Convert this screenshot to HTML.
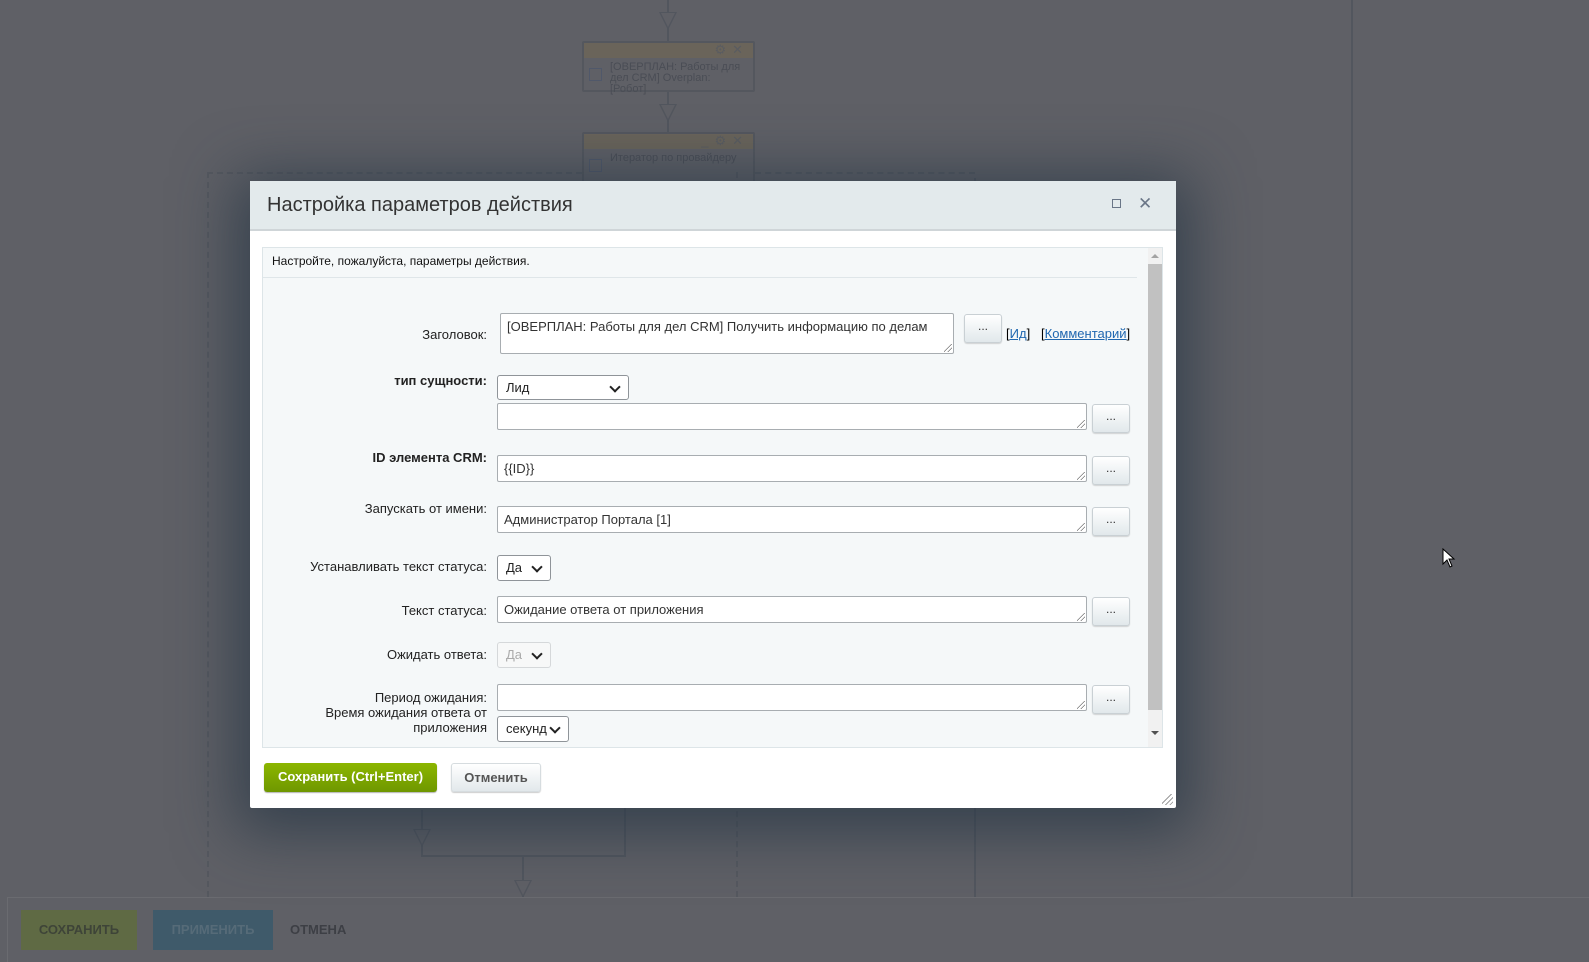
<!DOCTYPE html>
<html><head><meta charset="utf-8"><style>
*{box-sizing:border-box}
body{margin:0;width:1589px;height:962px;background:#5f6066;position:relative;overflow:hidden;font-family:"Liberation Sans",Arial,sans-serif;font-size:13px;color:#000}
.abs{position:absolute}
.vl{position:absolute;width:0;border-left:2px solid #52565e}
.dl{position:absolute;width:0;border-left:2px dashed #55585f}
.node{position:absolute;border:2px solid #54575e;background:#5f6066;border-radius:2px}
.node .h{height:15px;background:#6a645a;color:#5a5c60;font-size:13px;text-align:right;padding-right:4px;line-height:14px;letter-spacing:6px}
.node .t{color:#4a4d55;font-size:11px;line-height:11px;padding:4px 4px 0 26px;position:relative}
.node .ic{position:absolute;left:5px;top:10px;width:13px;height:13px;border:1px solid #50586a}
.tri{position:absolute;width:0;height:0;border-left:9px solid transparent;border-right:9px solid transparent;border-top:18px solid #52565e}
.tri:after{content:"";position:absolute;left:-7px;top:-17px;border-left:7px solid transparent;border-right:7px solid transparent;border-top:14px solid #5f6066}
.dlg{position:absolute;left:250px;top:181px;width:926px;height:627px;background:#fff;border-radius:2px;box-shadow:0 10px 60px 15px rgba(40,55,70,.75)}
.hd{height:50px;background:#e3eaec;border-bottom:2px solid #cfd5d8;font-size:20px;color:#333;padding:13px 17px 9px}
.panel{position:absolute;left:12px;top:66px;width:901px;height:501px;background:#f5f8f9;border:1px solid #dde5e8;overflow:hidden}
.lbl{position:absolute;right:675px;text-align:right;font-size:13px;color:#222;white-space:nowrap}
.ta{position:absolute;background:#fff;border:1px solid #a8adb1;border-radius:2px;font-size:13px;color:#333;padding:5px 6px}
.ta:after{content:"";position:absolute;right:1px;bottom:1px;width:8px;height:8px;background:linear-gradient(135deg,transparent 45%,#777 46%,#777 52%,transparent 53%,transparent 70%,#777 71%,#777 77%,transparent 78%)}
.sel{position:absolute;background:#fff;border:1px solid #8f9499;border-radius:3px;font-size:13px;color:#222;padding:4px 8px}
.sel:after{content:"";position:absolute;right:9px;top:7px;width:6px;height:6px;border-right:2px solid #222;border-bottom:2px solid #222;transform:rotate(45deg)}
.btn{position:absolute;width:38px;height:29px;border:1px solid #c9d0d4;border-radius:3px;background:linear-gradient(#fff,#e1e8eb);text-align:center;font-size:12px;line-height:22px;color:#333;box-shadow:0 1px 1px rgba(0,0,0,.15)}
a{color:#2067b0}
</style></head><body>
<div class="vl" style="left:667px;top:0;height:41px"></div>
<div class="tri" style="left:659px;top:12px"></div>
<div class="node" style="left:582px;top:41px;width:173px;height:51px"><div class="h">⚙✕</div><div class="t"><span class="ic"></span>[ОВЕРПЛАН: Работы для дел CRM] Overplan: [Робот]</div></div>
<div class="vl" style="left:667px;top:92px;height:40px"></div>
<div class="tri" style="left:659px;top:104px"></div>
<div class="node" style="left:582px;top:132px;width:173px;height:60px"><div class="h">_⚙✕</div><div class="t"><span class="ic"></span>Итератор по провайдеру</div></div>
<div class="dl" style="left:207px;top:172px;height:725px"></div>
<div class="dl" style="left:736px;top:172px;height:725px"></div>
<div class="abs" style="left:207px;top:172px;width:375px;border-top:2px dashed #55585f"></div>
<div class="abs" style="left:755px;top:172px;width:220px;border-top:2px dashed #55585f"></div>
<div class="vl" style="left:974px;top:178px;height:720px"></div>
<div class="vl" style="left:1351px;top:0;height:897px"></div>
<div class="vl" style="left:421px;top:810px;height:46px"></div>
<div class="vl" style="left:624px;top:808px;height:48px"></div>
<div class="abs" style="left:421px;top:855px;width:205px;border-top:2px solid #52565e"></div>
<div class="tri" style="left:413px;top:829px"></div>
<div class="vl" style="left:522px;top:856px;height:41px"></div>
<div class="tri" style="left:514px;top:880px"></div>
<div class="abs" style="left:7px;top:897px;width:1582px;height:65px;border-top:1px solid #6a6b70;border-left:1px solid #6a6b70;background:#5f6066"></div>
<div class="abs" style="left:21px;top:910px;width:116px;height:40px;background:#5f6a44;color:#3e4438;font-weight:bold;font-size:13px;text-align:center;line-height:40px">СОХРАНИТЬ</div>
<div class="abs" style="left:153px;top:910px;width:120px;height:40px;background:#3f5a6a;color:#566b78;font-weight:bold;font-size:13px;text-align:center;line-height:40px">ПРИМЕНИТЬ</div>
<div class="abs" style="left:290px;top:910px;height:40px;color:#3d3f45;font-weight:bold;font-size:13px;line-height:40px">ОТМЕНА</div>
<svg class="abs" style="left:1442px;top:548px" width="14" height="20"><path d="M1 1 L1 16 L5 12 L8 19 L10 18 L7 11 L12 11 Z" fill="#fff" stroke="#000" stroke-width="1"/></svg>

<div class="dlg">
 <div class="hd">Настройка параметров действия
  <span style="position:absolute;left:862px;top:18px;width:9px;height:9px;border:1.5px solid #6a7687"></span>
  <span style="position:absolute;left:888px;top:13px;font-size:17px;color:#6a7687">✕</span>
 </div>
 <div class="panel">
  <div class="abs" style="left:9px;top:6px;font-size:12px;color:#111">Настройте, пожалуйста, параметры действия.</div>
  <div class="abs" style="left:0;top:29px;width:874px;border-top:1px solid #dfe6e9"></div>
  <div class="abs" style="left:885px;top:0;width:16px;height:501px;background:#f1f1f1"></div>
  <div class="abs" style="left:885px;top:16px;width:14px;height:446px;background:#c1c1c1"></div>
  <div class="abs" style="left:888px;top:6px;border-left:4px solid transparent;border-right:4px solid transparent;border-bottom:4px solid #a3a3a3"></div>
  <div class="abs" style="left:888px;top:483px;border-left:4px solid transparent;border-right:4px solid transparent;border-top:4px solid #505050"></div>

  <div class="lbl" style="top:79px">Заголовок:</div>
  <div class="ta" style="left:237px;top:65px;width:454px;height:41px">[ОВЕРПЛАН: Работы для дел CRM] Получить информацию по делам</div>
  <div class="btn" style="left:701px;top:66px">...</div>
  <div class="abs" style="left:743px;top:78px">[<a href="#">Ид</a>]&nbsp;&nbsp;&nbsp;[<a href="#">Комментарий</a>]</div>

  <div class="lbl" style="top:125px;font-weight:bold">тип сущности:</div>
  <div class="sel" style="left:234px;top:127px;width:132px;height:25px">Лид</div>
  <div class="ta" style="left:234px;top:155px;width:590px;height:27px"></div>
  <div class="btn" style="left:829px;top:156px">...</div>

  <div class="lbl" style="top:202px;font-weight:bold">ID элемента CRM:</div>
  <div class="ta" style="left:234px;top:207px;width:590px;height:27px">{{ID}}</div>
  <div class="btn" style="left:829px;top:208px">...</div>

  <div class="lbl" style="top:253px">Запускать от имени:</div>
  <div class="ta" style="left:234px;top:258px;width:590px;height:27px">Администратор Портала [1]</div>
  <div class="btn" style="left:829px;top:259px">...</div>

  <div class="lbl" style="top:311px">Устанавливать текст статуса:</div>
  <div class="sel" style="left:234px;top:307px;width:54px;height:26px">Да</div>

  <div class="lbl" style="top:355px">Текст статуса:</div>
  <div class="ta" style="left:234px;top:348px;width:590px;height:27px">Ожидание ответа от приложения</div>
  <div class="btn" style="left:829px;top:349px">...</div>

  <div class="lbl" style="top:399px">Ожидать ответа:</div>
  <div class="sel" style="left:234px;top:394px;width:54px;height:26px;color:#aaa;border-color:#d5d8da;background:#f7f8f8">Да</div>

  <div class="lbl" style="top:442px;line-height:15px">Период ожидания:<br>Время ожидания ответа от<br>приложения</div>
  <div class="ta" style="left:234px;top:436px;width:590px;height:27px"></div>
  <div class="btn" style="left:829px;top:437px">...</div>
  <div class="sel" style="left:234px;top:468px;width:72px;height:26px;padding-right:20px">секунд</div>
 </div>
 <div class="abs" style="left:14px;top:582px;width:173px;height:29px;border-radius:3px;background:linear-gradient(#8cb600,#6f9700);color:#fff;font-weight:bold;font-size:13px;text-align:center;line-height:28px;box-shadow:0 1px 1px rgba(0,0,0,.3)">Сохранить (Ctrl+Enter)</div>
 <div class="abs" style="left:201px;top:582px;width:90px;height:29px;border-radius:3px;border:1px solid #d6dcdf;background:linear-gradient(#fff,#e2e8eb);color:#555;font-weight:bold;font-size:13px;text-align:center;line-height:27px;box-shadow:0 1px 1px rgba(0,0,0,.2)">Отменить</div>
 <div class="abs" style="right:3px;bottom:3px;width:11px;height:11px;background:linear-gradient(135deg,transparent 40%,#999 41%,#999 46%,transparent 47%,transparent 62%,#999 63%,#999 68%,transparent 69%,transparent 82%,#999 83%,#999 88%,transparent 89%)"></div>
</div>
</body></html>
